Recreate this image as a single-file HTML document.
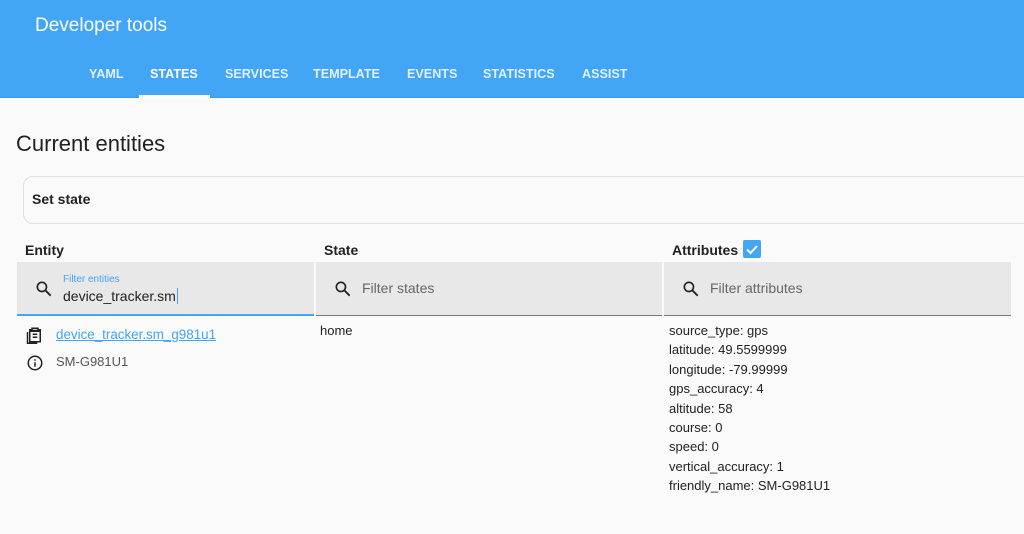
<!DOCTYPE html>
<html><head><style>
body{margin:0;width:1024px;height:534px;background:#fafafa;font-family:"Liberation Sans",sans-serif;overflow:hidden;position:relative;color:#212121}
.hdr{position:absolute;left:0;top:0;width:1024px;height:97px;background:#42a5f5;border-bottom:1px solid #3b97e0}
.title{position:absolute;left:35px;top:15px;font-size:19px;color:#fff}
.tab{position:absolute;top:67px;font-size:12.6px;font-weight:bold;color:#e3f1fd}
.tab.a{color:#fff}
.ind{position:absolute;left:139px;top:95px;width:71px;height:3px;background:#fff}
h1{position:absolute;left:16px;top:131px;margin:0;font-size:22px;font-weight:normal;color:#212121}
.card{position:absolute;left:23px;top:176px;width:1020px;height:46px;border:1px solid #e0e0e0;border-radius:10px;background:#fafafa}
.card span{position:absolute;left:8px;top:14px;font-size:14px;font-weight:bold}
.th{position:absolute;top:242px;font-size:14px;font-weight:bold}
.f{position:absolute;top:262px;height:53px;background:#e8e8e8;border-bottom:1px solid #777}
.f svg{position:absolute;left:17px;top:17px}
.f .ph{position:absolute;left:46px;top:18px;font-size:14px;color:#666}
.t{position:absolute;font-size:13px;color:#212121}
</style></head><body>
<div class="hdr"></div>
<div class="title">Developer tools</div>
<div class="tab" style="left:89px">YAML</div>
<div class="tab a" style="left:150px">STATES</div>
<div class="tab" style="left:225px">SERVICES</div>
<div class="tab" style="left:313px">TEMPLATE</div>
<div class="tab" style="left:407px">EVENTS</div>
<div class="tab" style="left:483px">STATISTICS</div>
<div class="tab" style="left:582px">ASSIST</div>
<div class="ind"></div>
<h1>Current entities</h1>
<div class="card"><span>Set state</span></div>
<div class="th" style="left:25px">Entity</div>
<div class="th" style="left:324px">State</div>
<div class="th" style="left:672px">Attributes</div>
<div style="position:absolute;left:743px;top:240px;width:18px;height:18px;background:#42a5f5;border-radius:2px"><svg width="18" height="18"><path d="M4 9.5l3.5 3.5 6.5-7" stroke="#fff" stroke-width="2" fill="none"/></svg></div>
<div class="f" style="left:17px;width:297px;border-bottom:2px solid #42a5f5;height:52px">
<svg width="20" height="20" viewBox="0 0 24 24"><circle cx="9.5" cy="9.5" r="5.5" stroke="#222" stroke-width="2" fill="none"/><path d="M14 14l6 6" stroke="#222" stroke-width="2.2"/></svg>
<div style="position:absolute;left:46px;top:12px;font-size:10px;color:#42a5f5">Filter entities</div>
<div style="position:absolute;left:46px;top:26px;font-size:14px;color:#212121">device_tracker.sm<span style="border-left:1px solid #42a5f5;margin-left:1px"></span></div>
</div>
<div class="f" style="left:316px;width:346px"><svg width="20" height="20" viewBox="0 0 24 24"><circle cx="9.5" cy="9.5" r="5.5" stroke="#222" stroke-width="2" fill="none"/><path d="M14 14l6 6" stroke="#222" stroke-width="2.2"/></svg><div class="ph">Filter states</div></div>
<div class="f" style="left:664px;width:347px"><svg width="20" height="20" viewBox="0 0 24 24"><circle cx="9.5" cy="9.5" r="5.5" stroke="#222" stroke-width="2" fill="none"/><path d="M14 14l6 6" stroke="#222" stroke-width="2.2"/></svg><div class="ph">Filter attributes</div></div>
<svg style="position:absolute;left:26px;top:326px" width="18" height="18" viewBox="0 0 24 24"><path d="M8 3h8v3H8zM5 5h2v2h10V5h2v16H5z" fill="none" stroke="#222" stroke-width="2"/><path d="M9 11h6M9 15h6" stroke="#222" stroke-width="2"/><path d="M2 8v15h13" fill="none" stroke="#222" stroke-width="2"/></svg>
<div class="t" style="left:56px;top:327px;color:#42a5f5;text-decoration:underline;font-size:13.4px">device_tracker.sm_g981u1</div>
<svg style="position:absolute;left:26px;top:354px" width="18" height="18" viewBox="0 0 24 24"><circle cx="12" cy="12" r="9" stroke="#222" stroke-width="2" fill="none"/><path d="M12 11v6M12 7v2" stroke="#222" stroke-width="2"/></svg>
<div class="t" style="left:56px;top:354px;color:#555">SM-G981U1</div>
<div class="t" style="left:320px;top:323px">home</div>
<div class="t" style="left:669px;top:321px;line-height:19.4px">source_type: gps<br>latitude: 49.5599999<br>longitude: -79.99999<br>gps_accuracy: 4<br>altitude: 58<br>course: 0<br>speed: 0<br>vertical_accuracy: 1<br>friendly_name: SM-G981U1</div>
</body></html>
